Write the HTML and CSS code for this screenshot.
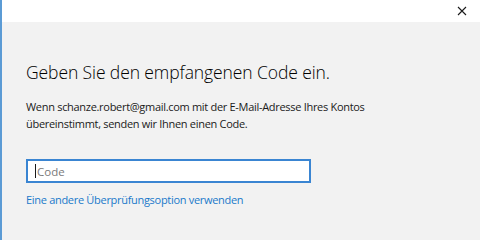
FILE: index.html
```html
<!DOCTYPE html>
<html lang="de">
<head>
  <meta charset="UTF-8">
  <title>Code eingeben</title>
  <link rel="stylesheet" href="styles.css">
</head>
<body>
  <div class="window">
    <div class="titlebar">
      <button class="close-btn" aria-label="Schließen">
        <svg width="10" height="10" viewBox="0 0 10 10">
          <path d="M1 1 L9 9 M9 1 L1 9" stroke="#1a1a1a" stroke-width="1.1" fill="none"/>
        </svg>
      </button>
    </div>

    <div class="content">
      <h1 class="title">Geben Sie den empfangenen Code ein.</h1>
      <p class="info">Wenn schanze.robert@gmail.com mit der E-Mail-Adresse Ihres Kontos<br>übereinstimmt, senden wir Ihnen einen Code.</p>

      <div class="code-field">
        <span class="caret"></span>
        <input type="text" class="code-input" placeholder="Code">
      </div>

      <a href="#" class="other-option">Eine andere Überprüfungsoption verwenden</a>
    </div>
  </div>
</body>
</html>
```

FILE: styles.css
```css
html, body {
  margin: 0;
  height: 100%;
}
body {
  font-family: 'Open Sans', 'Noto Sans', sans-serif;
  background: #f2f2f2;
  color: #1a1a1a;
}
.window {
  height: 240px;
  border-left: 2px solid #5b9bd5;
  box-sizing: border-box;
  background: #f2f2f2;
}
.titlebar {
  height: 22px;
  background: #ffffff;
  display: flex;
  justify-content: flex-end;
  align-items: center;
}
.close-btn {
  width: 30px;
  height: 22px;
  margin-right: 3px;
  border: none;
  background: transparent;
  padding: 0;
  display: flex;
  align-items: center;
  justify-content: center;
}
.content {
  padding: 38px 0 0 24px;
}
.title {
  margin: 0;
  font-size: 17.5px;
  font-weight: 300;
  letter-spacing: -0.1px;
  line-height: 24px;
  color: #000000;
}
.info {
  margin: 14px 0 0;
  font-size: 11px;
  letter-spacing: -0.3px;
  line-height: 17px;
  color: #1a1a1a;
}
.code-field {
  position: relative;
  margin-top: 27px;
  width: 285px;
}
.code-input {
  display: block;
  width: 100%;
  height: 24px;
  box-sizing: border-box;
  border: 2px solid #3a85d2;
  background: #ffffff;
  padding: 0 0 0 9px;
  font-family: inherit;
  font-size: 11.5px;
  outline: none;
}
.code-input::placeholder {
  color: #7a7a7a;
}
.caret {
  position: absolute;
  left: 9px;
  top: 5px;
  width: 1px;
  height: 14px;
  background: #1a1a1a;
}
.other-option {
  display: inline-block;
  margin-top: 9px;
  font-size: 11px;
  letter-spacing: -0.3px;
  line-height: 16px;
  color: #1979ca;
  text-decoration: none;
}
```
